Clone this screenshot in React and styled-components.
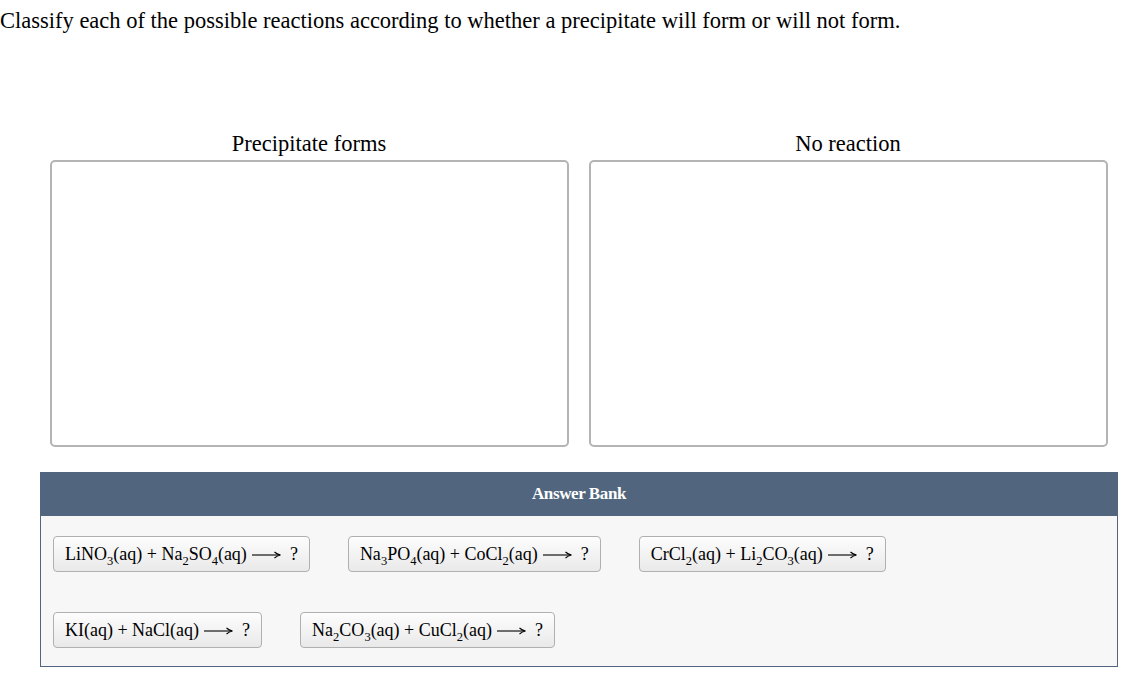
import styled, { createGlobalStyle } from "styled-components";

const GlobalStyle = createGlobalStyle`
  html, body {
    margin: 0;
    padding: 0;
    background: #ffffff;
  }
  body {
    font-family: "Liberation Serif", "Times New Roman", serif;
    color: #000000;
  }
`;

const reactionsRow1 = [
  [["LiNO", "3"], ["(aq) + Na", "2"], ["SO", "4"], ["(aq)"]],
  [["Na", "3"], ["PO", "4"], ["(aq) + CoCl", "2"], ["(aq)"]],
  [["CrCl", "2"], ["(aq) + Li", "2"], ["CO", "3"], ["(aq)"]],
];

const reactionsRow2 = [
  [["KI(aq) + NaCl(aq)"]],
  [["Na", "2"], ["CO", "3"], ["(aq) + CuCl", "2"], ["(aq)"]],
];

const Arrow = () => (
  <ArrowSvg width="29" height="10" viewBox="0 0 29 10">
    <line x1="0" y1="5" x2="27.5" y2="5" stroke="#000" strokeWidth="1.1" />
    <path d="M22.5 2 Q25 4.2 28.5 5 Q25 5.8 22.5 8" fill="none" stroke="#000" strokeWidth="1.1" />
  </ArrowSvg>
);

const Reaction = ({ parts }) => (
  <Chip>
    {parts.map(([text, sub], i) => (
      <span key={i}>
        {text}
        {sub && <Sub>{sub}</Sub>}
      </span>
    ))}
    <Arrow />
    <Question>?</Question>
  </Chip>
);

const App = () => {
  return (
    <Page>
      <GlobalStyle />
      <Prompt>
        Classify each of the possible reactions according to whether a
        precipitate will form or will not form.
      </Prompt>
      <Zones>
        <Zone>
          <ZoneLabel>Precipitate forms</ZoneLabel>
          <DropBox />
        </Zone>
        <Zone>
          <ZoneLabel>No reaction</ZoneLabel>
          <DropBox />
        </Zone>
      </Zones>
      <Bank>
        <BankHeader>Answer Bank</BankHeader>
        <BankBody>
          <ChipRow>
            {reactionsRow1.map((parts, i) => (
              <Reaction key={i} parts={parts} />
            ))}
          </ChipRow>
          <ChipRow>
            {reactionsRow2.map((parts, i) => (
              <Reaction key={i} parts={parts} />
            ))}
          </ChipRow>
        </BankBody>
      </Bank>
    </Page>
  );
};

export const Page = styled.div`
  width: 1147px;
  padding-top: 8px;
`;

export const Prompt = styled.div`
  font-size: 22.5px;
  line-height: 26px;
`;

export const Zones = styled.div`
  display: grid;
  grid-template-columns: 518px 518px;
  column-gap: 21px;
  margin: 97px 0 0 50px;
`;

export const Zone = styled.div`
  display: flex;
  flex-direction: column;
  align-items: center;
`;

export const ZoneLabel = styled.div`
  font-size: 22.5px;
  line-height: 26px;
  margin-bottom: 3px;
`;

export const DropBox = styled.div`
  box-sizing: border-box;
  width: 519px;
  height: 287px;
  border: 2px solid #b4b4b4;
  border-radius: 5px;
  background: #ffffff;
`;

export const Bank = styled.div`
  margin: 25px 0 0 40px;
  width: 1078px;
`;

export const BankHeader = styled.div`
  height: 44px;
  display: flex;
  align-items: center;
  justify-content: center;
  background: #51667e;
  color: #ffffff;
  font-size: 17px;
  font-weight: 700;
  letter-spacing: -0.4px;
`;

export const BankBody = styled.div`
  box-sizing: border-box;
  height: 151px;
  background: #f7f7f7;
  border: 1px solid #51667e;
  border-top: none;
  padding: 20px 12px;
  display: flex;
  flex-direction: column;
  gap: 40px;
`;

export const ChipRow = styled.div`
  display: flex;
  gap: 38px;
`;

export const Chip = styled.div`
  box-sizing: border-box;
  height: 36px;
  display: flex;
  align-items: center;
  padding: 0 11px;
  border: 1px solid #b0b0b0;
  border-radius: 4px;
  background: linear-gradient(#fdfdfd, #e9e9e9);
  font-size: 18px;
  white-space: pre;
`;

export const Sub = styled.sub`
  font-size: 12.5px;
  vertical-align: -5px;
  line-height: 0;
`;

export const ArrowSvg = styled.svg`
  margin: 1px 9px 0 5px;
  flex-shrink: 0;
`;

export const Question = styled.span`
  font-size: 18px;
`;

export default App;
